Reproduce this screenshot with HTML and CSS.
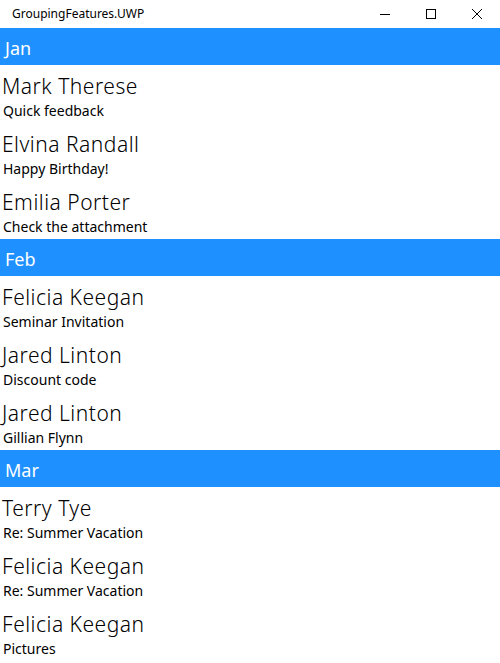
FILE: index.html
```html
<!DOCTYPE html>
<html>
<head>
<meta charset="utf-8">
<link rel="stylesheet" href="styles.css">
</head>
<body>
<div class="titlebar">
  <span class="title">GroupingFeatures.UWP</span>
  <div class="controls">
    <span class="ctl"><svg width="10" height="10" viewBox="0 0 10 10"><path d="M0 5.5H10" stroke="#000" stroke-width="1"/></svg></span>
    <span class="ctl"><svg width="10" height="10" viewBox="0 0 10 10"><rect x="0.5" y="0.5" width="9" height="9" fill="none" stroke="#000" stroke-width="1"/></svg></span>
    <span class="ctl"><svg width="10" height="10" viewBox="0 0 10 10"><path d="M0 0L10 10M10 0L0 10" stroke="#000" stroke-width="1"/></svg></span>
  </div>
</div>
<div class="list">
  <div class="group-header">Jan</div>
  <div class="item"><div class="name">Mark Therese</div><div class="subject">Quick feedback</div></div>
  <div class="item"><div class="name">Elvina Randall</div><div class="subject">Happy Birthday!</div></div>
  <div class="item"><div class="name">Emilia Porter</div><div class="subject">Check the attachment</div></div>
  <div class="group-header">Feb</div>
  <div class="item"><div class="name">Felicia Keegan</div><div class="subject">Seminar Invitation</div></div>
  <div class="item"><div class="name">Jared Linton</div><div class="subject">Discount code</div></div>
  <div class="item"><div class="name">Jared Linton</div><div class="subject">Gillian Flynn</div></div>
  <div class="group-header">Mar</div>
  <div class="item"><div class="name">Terry Tye</div><div class="subject">Re: Summer Vacation</div></div>
  <div class="item"><div class="name">Felicia Keegan</div><div class="subject">Re: Summer Vacation</div></div>
  <div class="item"><div class="name">Felicia Keegan</div><div class="subject">Pictures</div></div>
</div>
</body>
</html>
```
FILE: styles.css
```css
html, body {
  margin: 0;
  padding: 0;
  background: #fff;
  font-family: "Noto Sans", "Open Sans", sans-serif;
  color: #000;
  overflow: hidden;
}
.titlebar {
  height: 28px;
  display: flex;
  align-items: center;
  justify-content: space-between;
}
.title {
  font-size: 12px;
  padding-left: 12px;
  line-height: 28px;
}
.controls {
  display: flex;
  height: 28px;
}
.ctl {
  width: 46px;
  display: flex;
  align-items: center;
  justify-content: center;
}
.ctl svg { display: block; }
.group-header {
  height: 37px;
  box-sizing: border-box;
  background: #1e90ff;
  color: #fff;
  font-size: 18px;
  line-height: 36px;
  padding: 2px 0 0 5px;
}
.item {
  height: 58px;
  box-sizing: border-box;
  padding-top: 7px;
}
.name {
  font-size: 21px;
  font-weight: 300;
  letter-spacing: 0.5px;
  line-height: 28px;
  padding-left: 2px;
}
.subject {
  font-size: 14px;
  line-height: 20px;
  padding-left: 3px;
  margin-top: 1px;
}
```
